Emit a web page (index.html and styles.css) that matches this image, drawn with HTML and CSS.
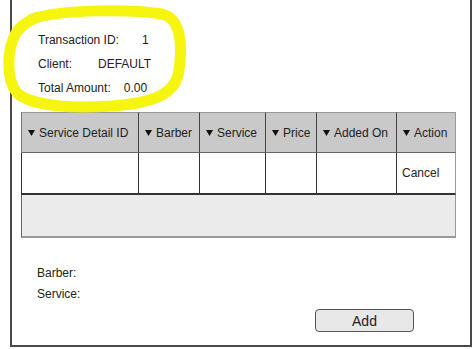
FILE: index.html
```html
<!DOCTYPE html>
<html>
<head>
<meta charset="utf-8">
<link rel="stylesheet" href="styles.css">
</head>
<body>
<div class="panel">
  <div class="info">
    <div class="info-row"><span class="label">Transaction ID:</span><span class="value v-id">1</span></div>
    <div class="info-row"><span class="label">Client:</span><span class="value v-client">DEFAULT</span></div>
    <div class="info-row"><span class="label">Total Amount:</span><span class="value v-total">0.00</span></div>
  </div>

  <div class="grid">
    <div class="th first"><svg class="tri" viewBox="0 0 7 6"><path d="M0 0H7L3.5 6Z"/></svg>Service Detail ID</div>
    <div class="th"><svg class="tri" viewBox="0 0 7 6"><path d="M0 0H7L3.5 6Z"/></svg>Barber</div>
    <div class="th"><svg class="tri" viewBox="0 0 7 6"><path d="M0 0H7L3.5 6Z"/></svg>Service</div>
    <div class="th"><svg class="tri" viewBox="0 0 7 6"><path d="M0 0H7L3.5 6Z"/></svg>Price</div>
    <div class="th"><svg class="tri" viewBox="0 0 7 6"><path d="M0 0H7L3.5 6Z"/></svg>Added On</div>
    <div class="th last"><svg class="tri" viewBox="0 0 7 6"><path d="M0 0H7L3.5 6Z"/></svg>Action</div>

    <div class="td first"></div>
    <div class="td"></div>
    <div class="td"></div>
    <div class="td"></div>
    <div class="td"></div>
    <div class="td last">Cancel</div>

    <div class="foot"></div>
  </div>

  <div class="form">
    <div class="form-row">Barber:</div>
    <div class="form-row">Service:</div>
  </div>
  <div class="actions">
    <button class="btn">Add</button>
  </div>

  <svg class="marker" viewBox="0 0 190 120" width="190" height="120">
    <path d="M30 19 C60 9, 130 9, 160 14 C178 18, 181 42, 177 70 C174 95, 150 103, 110 106 C70 109, 30 106, 15 93 C4 80, 5 50, 13 35 C18 26, 24 22, 36 17" />
  </svg>
</div>
</body>
</html>
```
FILE: styles.css
```css
html, body {
  margin: 0;
  padding: 0;
  background: #fff;
}
body {
  font-family: "Liberation Sans", Arial, sans-serif;
  font-size: 12px;
  color: #222;
  width: 474px;
  height: 349px;
  overflow: hidden;
}
.panel {
  position: relative;
  box-sizing: border-box;
  margin-left: 10px;
  width: 462px;
  height: 347px;
  border-left: 2px solid #4a4a4a;
  border-right: 2px solid #4a4a4a;
  border-bottom: 2px solid #4a4a4a;
  padding: 28px 0 0 9px;
}
.info {
  padding-left: 17px;
}
.info-row {
  height: 24px;
  line-height: 24px;
  display: flex;
}
.v-id { margin-left: 23px; }
.v-client { margin-left: 26px; }
.v-total { margin-left: 13px; }

.grid {
  margin-top: 12px;
  display: grid;
  grid-template-columns: 118px 61px 66px 51px 80px 59px;
  grid-template-rows: 41px 42px 43px;
  width: 435px;
}
.th {
  background: #c9c9c9;
  border-top: 1px solid #999;
  border-right: 1px solid #444;
  border-bottom: 1px solid #666;
  display: flex;
  align-items: center;
  padding-left: 6px;
  white-space: nowrap;
  overflow: hidden;
}
.th.first { border-left: 1px solid #777; }
.th.last { border-right: 1px solid #999; }
.tri {
  width: 7px;
  height: 6px;
  margin-right: 4px;
  fill: #111;
  flex: none;
}
.td {
  background: #fff;
  border-right: 1px solid #333;
  border-bottom: 2px solid #333;
  display: flex;
  align-items: center;
  padding-left: 5px;
}
.td.first { border-left: 1px solid #333; }
.td.last { border-right: 1px solid #999; }
.foot {
  grid-column: 1 / -1;
  background: #ebebeb;
  border-left: 1px solid #666;
  border-right: 1px solid #999;
  border-bottom: 2px solid #999;
}
.form {
  margin-top: 25px;
  padding-left: 16px;
}
.form-row {
  height: 21px;
  line-height: 21px;
}
.actions {
  display: flex;
  justify-content: flex-end;
  padding-right: 56px;
  margin-top: 4px;
}
.btn {
  width: 99px;
  height: 23px;
  box-sizing: border-box;
  background: #e8e8e8;
  border: 1px solid #555;
  border-radius: 4px;
  font-family: "Liberation Sans", Arial, sans-serif;
  font-size: 14px;
  color: #222;
  padding: 0;
}
.marker {
  position: absolute;
  left: -10px;
  top: 0;
  fill: none;
  stroke: #f5f50f;
  stroke-width: 11;
  stroke-linecap: round;
  stroke-linejoin: round;
}
```
